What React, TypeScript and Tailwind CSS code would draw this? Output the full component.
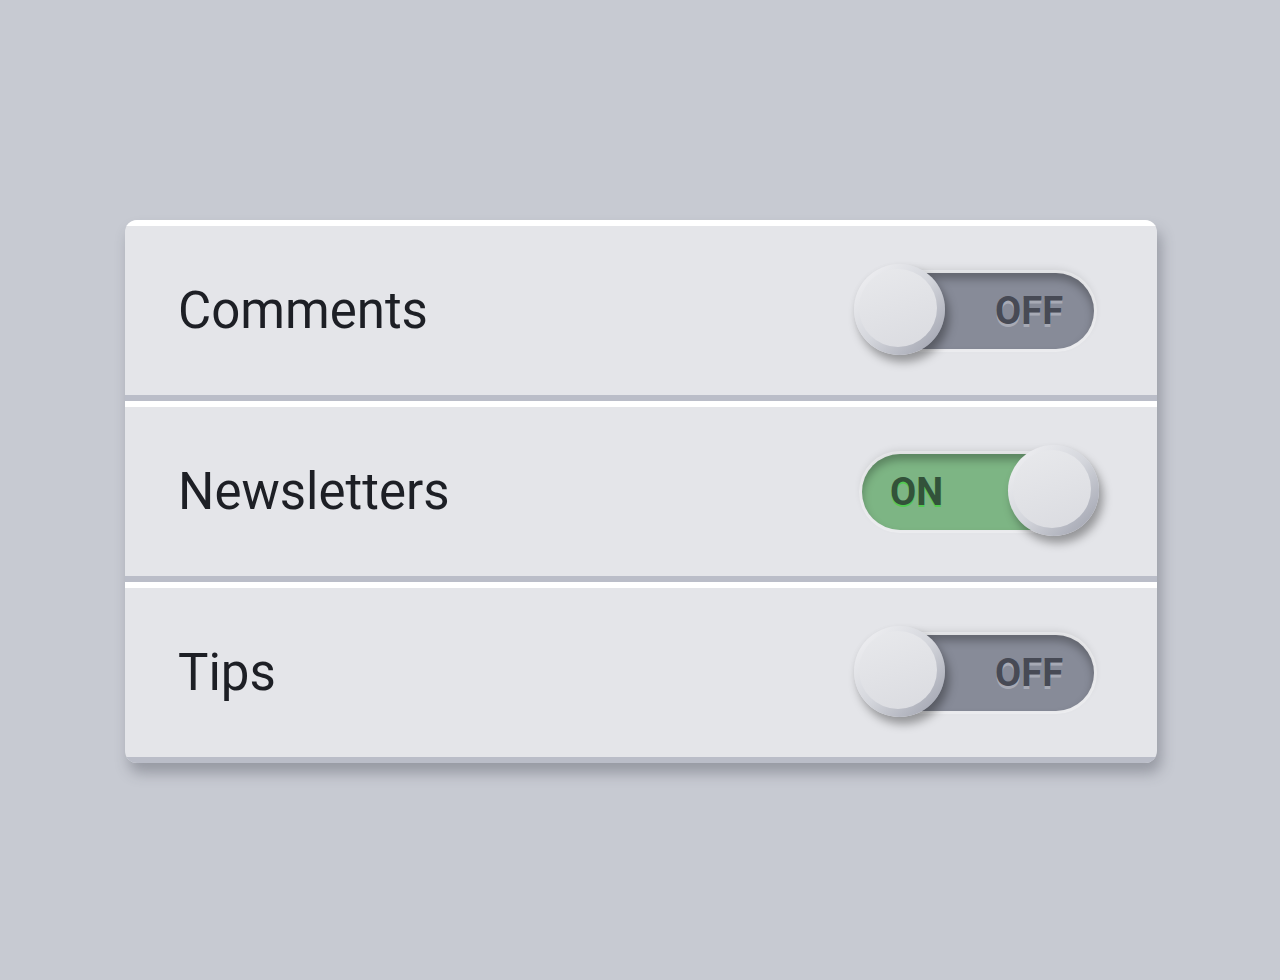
import React, { useState } from "react";

type ToggleProps = { on: boolean; onClick: () => void };

function Toggle({ on, onClick }: ToggleProps) {
  return (
    <button
      type="button"
      onClick={onClick}
      className="relative w-[246px] h-[92px] shrink-0 outline-none"
    >
      <div
        className={
          "absolute right-[6px] top-[9px] h-[76px] rounded-full flex items-center " +
          (on
            ? "left-[8px] bg-[#7db584] justify-start pl-[28px] shadow-[inset_0_6px_8px_rgba(0,0,0,0.28),0_0_0_3px_rgba(255,255,255,0.35),0_-3px_8px_rgba(0,0,0,0.12)]"
            : "left-[4px] bg-[#878b98] justify-end pr-[31px] shadow-[inset_0_6px_8px_rgba(0,0,0,0.28),0_0_0_3px_rgba(255,255,255,0.35),0_-3px_8px_rgba(0,0,0,0.12)]")
        }
      >
        <span
          className={
            "font-['Roboto'] font-bold text-[38px] leading-none " +
            (on
              ? "text-[#33523a] [text-shadow:0_2px_0_#52c852]"
              : "text-[#474a55] [text-shadow:0_3px_0_#a7aab5]")
          }
        >
          {on ? "ON" : "OFF"}
        </span>
      </div>
      <div
        className={
          "absolute top-0 w-[91px] h-[91px] rounded-full bg-[linear-gradient(135deg,#f4f4f6_0%,#d4d6dc_50%,#9a9daa_100%)] shadow-[4px_7px_10px_rgba(0,0,0,0.35)] " +
          (on ? "left-[154px]" : "left-0")
        }
      >
        <div className="absolute left-[5px] top-[5px] w-[78px] h-[78px] rounded-full bg-[linear-gradient(160deg,#e8e9ec_0%,#dadbe0_100%)]" />
      </div>
    </button>
  );
}

export default function App() {
  const [state, setState] = useState({ Comments: false, Newsletters: true, Tips: false } as Record<string, boolean>);
  const items = ["Comments", "Newsletters", "Tips"];
  return (
    <div className="w-full h-[980px] bg-[#c7cad2] flex items-center justify-center font-['Roboto',sans-serif]">
      <div className="w-[1032px] rounded-[12px] overflow-hidden bg-[#e4e5e9] shadow-[4px_10px_14px_rgba(60,62,75,0.35)] ml-[2px] mt-[2px]">
        {items.map((name) => (
          <div
            key={name}
            className="h-[181px] border-t-[6px] border-t-white border-b-[6px] border-b-[#babdc8] flex items-center justify-between pl-[53px] pr-[57px]"
          >
            <span className="text-[51px] leading-none text-[#1d1f25] font-['Roboto']">{name}</span>
            <Toggle
              on={state[name]}
              onClick={() => setState((s) => ({ ...s, [name]: !s[name] }))}
            />
          </div>
        ))}
      </div>
    </div>
  );
}
